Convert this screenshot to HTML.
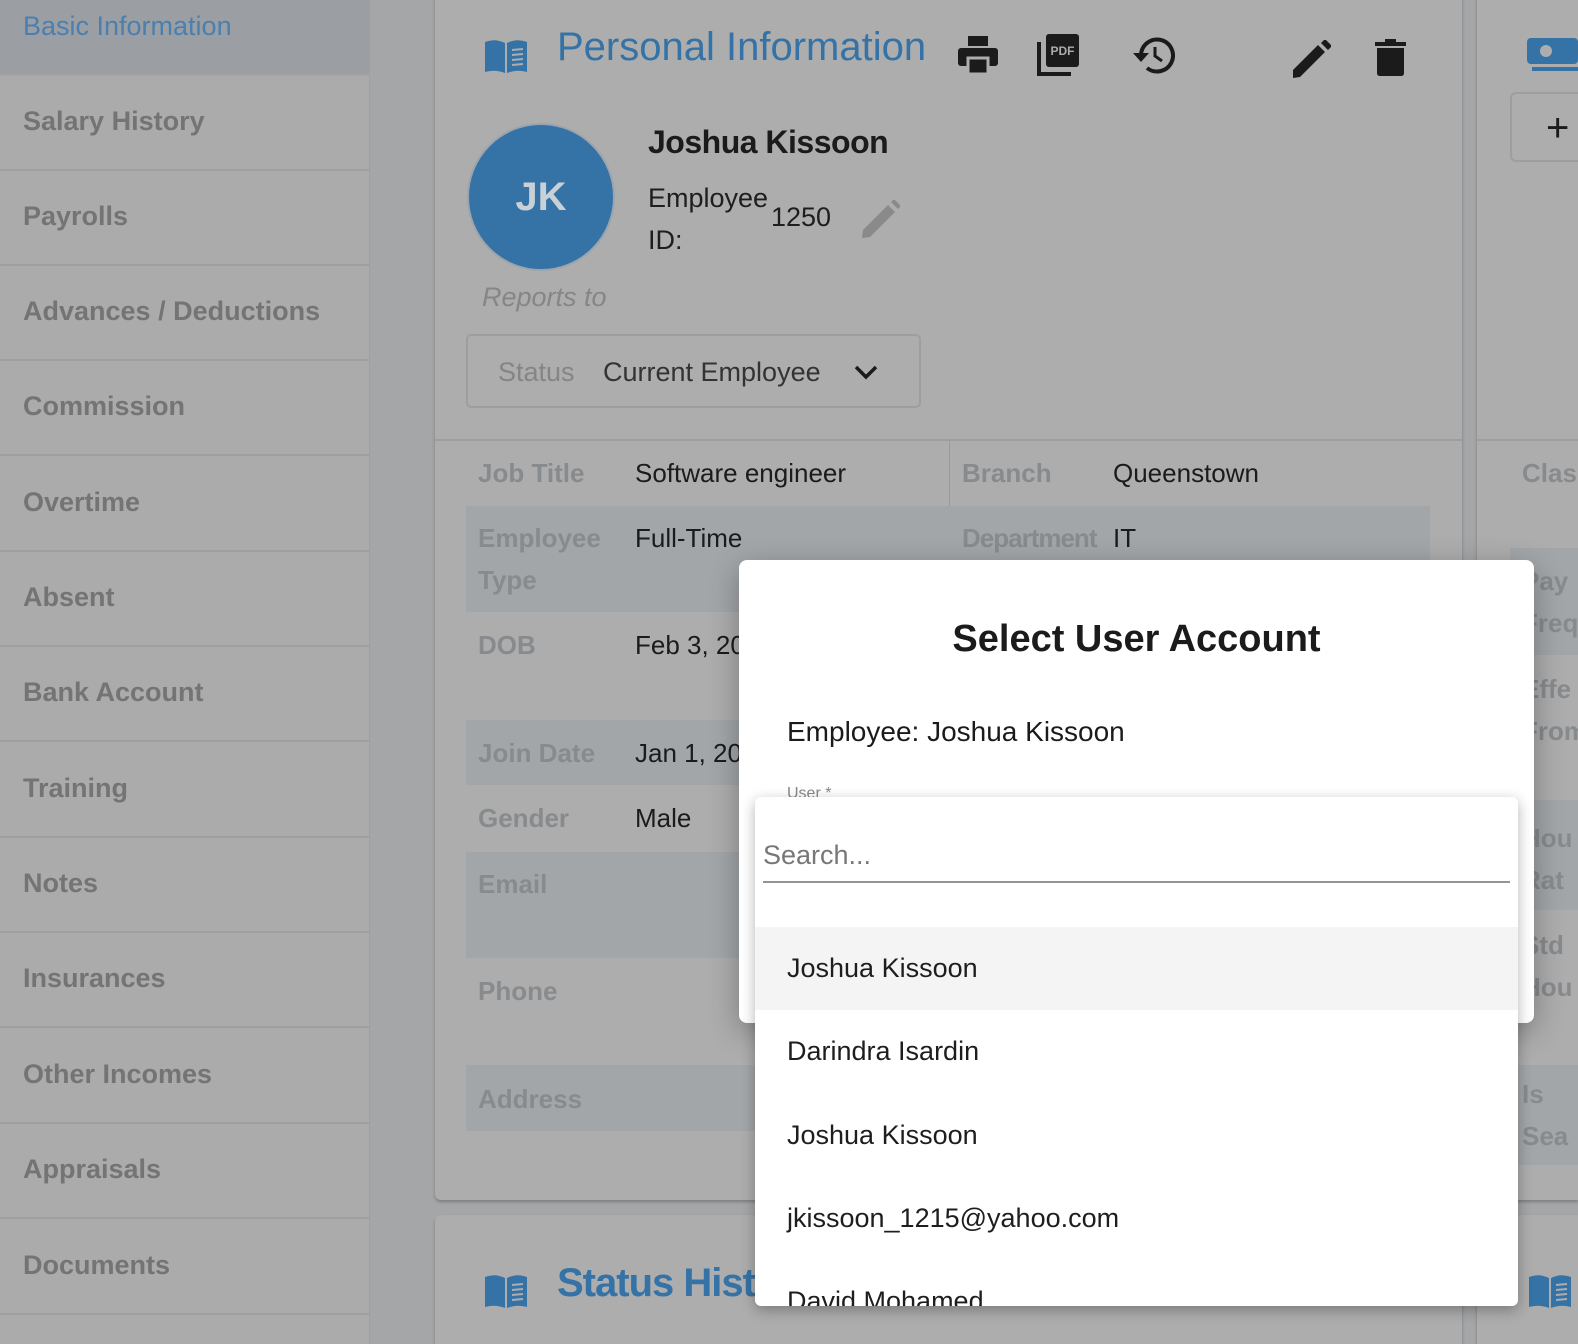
<!DOCTYPE html>
<html style="width:1578px;height:1344px;overflow:hidden"><head><meta charset="utf-8"><style>
*{margin:0;padding:0;box-sizing:border-box}
body{width:1578px;height:1344px;overflow:hidden;background:#a5a6a8;font-family:"Liberation Sans",sans-serif;position:relative}
.a{position:absolute;white-space:nowrap}
.side{position:absolute;left:0;top:0;width:370px;height:1344px;background:#ababab;border-right:1px solid #a0a0a0;overflow:hidden}
.si{position:absolute;left:0;width:370px;height:95px;border-bottom:2px solid #9f9f9f;font-size:27px;font-weight:bold;color:#747474;padding-left:23px}
.si span{position:absolute;left:23px;bottom:32px}
.panel{position:absolute;background:#adadad;border-radius:6px;box-shadow:0 2px 3px rgba(0,0,0,.25)}
.lbl{position:absolute;font-size:26px;font-weight:bold;color:#888b8e;line-height:42px}
.val{position:absolute;font-size:26px;color:#1b1b1b;line-height:42px}
.sh{position:absolute;background:#a3a6a9}
.d{font-size:27px;color:#1e1e1e}
</style></head><body>
<div class="side">
<div class="si" style="top:-19px;background:#9b9fa3;border-bottom-color:#a3a3a3"><span style="color:#4a7fb0;font-weight:normal">Basic Information</span></div>
<div class="si" style="top:76px"><span>Salary History</span></div>
<div class="si" style="top:171px"><span>Payrolls</span></div>
<div class="si" style="top:266px"><span>Advances / Deductions</span></div>
<div class="si" style="top:361px"><span>Commission</span></div>
<div class="si" style="top:457px"><span>Overtime</span></div>
<div class="si" style="top:552px"><span>Absent</span></div>
<div class="si" style="top:647px"><span>Bank Account</span></div>
<div class="si" style="top:743px"><span>Training</span></div>
<div class="si" style="top:838px"><span>Notes</span></div>
<div class="si" style="top:933px"><span>Insurances</span></div>
<div class="si" style="top:1029px"><span>Other Incomes</span></div>
<div class="si" style="top:1124px"><span>Appraisals</span></div>
<div class="si" style="top:1220px"><span>Documents</span></div>
</div>

<div class="panel" style="left:435px;top:-10px;width:1027px;height:1210px"></div>
<div class="panel" style="left:435px;top:1215px;width:1027px;height:129px;border-radius:6px 6px 0 0"></div>
<div class="panel" style="left:1477px;top:-10px;width:101px;height:1210px;border-radius:6px 0 0 6px"></div>
<div class="panel" style="left:1477px;top:1215px;width:101px;height:129px;border-radius:6px 0 0 0"></div>

<svg class="a" style="left:483px;top:38px" width="46" height="36" viewBox="0 0 46 36"><path d="M2 4 Q12 0 22 5 V35 Q12 31 2 34Z M24 5 Q34 0 44 4 V34 Q34 31 24 35Z" fill="#3572a6"/><g stroke="#adadad" stroke-width="2"><line x1="29" y1="12" x2="40" y2="11"/><line x1="29" y1="17" x2="40" y2="16"/><line x1="29" y1="22" x2="40" y2="21"/><line x1="29" y1="27" x2="40" y2="26"/></g></svg>
<div class="a" style="left:557px;top:25px;font-size:40px;color:#3572a6">Personal Information</div>
<svg class="a" style="left:958px;top:36px" width="40" height="38" viewBox="0 0 40 38"><rect x="10" y="0" width="20" height="10" fill="#1b1b1b"/><rect x="0" y="12" width="40" height="18" rx="3" fill="#1b1b1b"/><rect x="10" y="22" width="20" height="16" fill="#1b1b1b" stroke="#adadad" stroke-width="3"/></svg>
<svg class="a" style="left:1037px;top:34px" width="42" height="42" viewBox="0 0 42 42"><path d="M2 8 V40 H34" stroke="#1b1b1b" stroke-width="4" fill="none"/><rect x="9" y="0" width="33" height="33" rx="3" fill="#1b1b1b"/><text x="25.5" y="21" font-size="12" font-family="Liberation Sans" fill="#adadad" text-anchor="middle" font-weight="bold">PDF</text></svg>
<svg class="a" style="left:1131px;top:35px" width="44" height="40" viewBox="0 0 44 40"><path d="M10 20 A16 16 0 1 1 16 33" stroke="#1b1b1b" stroke-width="4" fill="none"/><path d="M2 18 L10 27 L18 18Z" fill="#1b1b1b"/><path d="M24 12 V21 L31 26" stroke="#1b1b1b" stroke-width="3" fill="none"/></svg>
<svg class="a" style="left:1291px;top:40px" width="40" height="38" viewBox="0 0 40 38"><path d="M2 38 L2 30 L27 5 L34 12 L9 37Z M30 3 L34 -1 L41 6 L37 10Z" fill="#1b1b1b"/></svg>
<svg class="a" style="left:1375px;top:39px" width="32" height="38" viewBox="0 0 32 38"><rect x="0" y="3" width="31" height="4" fill="#1b1b1b"/><rect x="10" y="0" width="11" height="4" fill="#1b1b1b"/><path d="M2 9 H29 V34 Q29 37 26 37 H5 Q2 37 2 34Z" fill="#1b1b1b"/></svg>

<div class="a" style="left:467px;top:123px;width:148px;height:148px;border-radius:50%;background:#3572a6;border:2px solid #9ba4ad;color:#c9d0d6;font-size:40px;font-weight:bold;text-align:center;line-height:144px">JK</div>
<div class="a" style="left:648px;top:124px;font-size:32px;color:#1b1b1b;font-weight:bold;letter-spacing:-0.5px">Joshua Kissoon</div>
<div class="a d" style="left:648px;top:177px;line-height:42px;white-space:normal;width:130px">Employee<br>ID:</div>
<div class="a d" style="left:771px;top:202px">1250</div>
<svg class="a" style="left:862px;top:200px" width="38" height="38" viewBox="0 0 38 38"><path d="M0 38 L1 30 L26 5 L33 12 L8 37Z M29 2 L32 -1 L39 6 L36 9Z" fill="#8a8a8a"/></svg>
<div class="a" style="left:482px;top:282px;font-size:27px;font-style:italic;color:#868686">Reports to</div>
<div class="a" style="left:466px;top:334px;width:455px;height:74px;border:2px solid #9e9e9e;border-radius:5px"></div>
<div class="a" style="left:498px;top:357px;font-size:27px;color:#858585">Status</div>
<div class="a" style="left:603px;top:357px;font-size:27px;color:#333">Current Employee</div>
<svg class="a" style="left:854px;top:364px" width="24" height="16" viewBox="0 0 24 16"><path d="M2 3 L12 13 L22 3" stroke="#1b1b1b" stroke-width="3.5" fill="none"/></svg>

<svg class="a" style="left:1527px;top:38px" width="51" height="34" viewBox="0 0 51 34"><rect x="0" y="0" width="51" height="26" rx="4" fill="#3572a6"/><circle cx="19" cy="13" r="6" fill="#adadad"/><rect x="5" y="29" width="46" height="4" fill="#3572a6"/></svg>
<div class="a" style="left:1510px;top:92px;width:90px;height:70px;border:2px solid #9e9e9e;border-radius:6px"></div>
<div class="a" style="left:1546px;top:106px;font-size:40px;color:#1b1b1b">+</div>

<div class="a" style="left:435px;top:439px;width:1027px;height:2px;background:#9d9d9d"></div>
<div class="a" style="left:1477px;top:439px;width:101px;height:2px;background:#9d9d9d"></div>
<div class="a" style="left:949px;top:441px;width:1px;height:120px;background:#999"></div>
<div class="sh" style="left:466px;top:506px;width:964px;height:106px"></div>
<div class="sh" style="left:466px;top:720px;width:300px;height:65px"></div>
<div class="sh" style="left:466px;top:852px;width:300px;height:106px"></div>
<div class="sh" style="left:466px;top:1065px;width:300px;height:66px"></div>
<div class="sh" style="left:1510px;top:548px;width:68px;height:107px"></div>
<div class="sh" style="left:1510px;top:800px;width:68px;height:110px"></div>
<div class="sh" style="left:1510px;top:1065px;width:68px;height:100px"></div>
<div class="lbl" style="left:478px;top:452px">Job Title</div><div class="val" style="left:635px;top:452px">Software engineer</div>
<div class="lbl" style="left:962px;top:452px">Branch</div><div class="val" style="left:1113px;top:452px">Queenstown</div>
<div class="lbl" style="left:478px;top:517px">Employee<br>Type</div><div class="val" style="left:635px;top:517px">Full-Time</div>
<div class="lbl" style="left:962px;top:517px;letter-spacing:-1px">Department</div><div class="val" style="left:1113px;top:517px">IT</div>
<div class="lbl" style="left:478px;top:624px">DOB</div><div class="val" style="left:635px;top:624px">Feb 3, 2000</div>
<div class="lbl" style="left:478px;top:732px">Join Date</div><div class="val" style="left:635px;top:732px">Jan 1, 2020</div>
<div class="lbl" style="left:478px;top:797px">Gender</div><div class="val" style="left:635px;top:797px">Male</div>
<div class="lbl" style="left:478px;top:863px">Email</div>
<div class="lbl" style="left:478px;top:970px">Phone</div>
<div class="lbl" style="left:478px;top:1078px">Address</div>
<div class="lbl" style="left:1522px;top:452px">Class</div>
<div class="lbl" style="left:1522px;top:560px">Pay<br>Freq</div>
<div class="lbl" style="left:1522px;top:668px">Effe<br>From</div>
<div class="lbl" style="left:1522px;top:817px">Hou<br>Rat</div>
<div class="lbl" style="left:1522px;top:924px">Std<br>Hou</div>
<div class="lbl" style="left:1522px;top:1073px">Is<br>Sea</div>

<svg class="a" style="left:483px;top:1273px" width="46" height="36" viewBox="0 0 46 36"><path d="M2 4 Q12 0 22 5 V35 Q12 31 2 34Z M24 5 Q34 0 44 4 V34 Q34 31 24 35Z" fill="#3572a6"/><g stroke="#adadad" stroke-width="2"><line x1="29" y1="12" x2="40" y2="11"/><line x1="29" y1="17" x2="40" y2="16"/><line x1="29" y1="22" x2="40" y2="21"/><line x1="29" y1="27" x2="40" y2="26"/></g></svg>
<div class="a" style="left:557px;top:1261px;font-size:40px;color:#3572a6;font-weight:bold;letter-spacing:-1px">Status History</div>
<svg class="a" style="left:1527px;top:1273px" width="46" height="36" viewBox="0 0 46 36"><path d="M2 4 Q12 0 22 5 V35 Q12 31 2 34Z M24 5 Q34 0 44 4 V34 Q34 31 24 35Z" fill="#3572a6"/><g stroke="#adadad" stroke-width="2"><line x1="29" y1="12" x2="40" y2="11"/><line x1="29" y1="17" x2="40" y2="16"/><line x1="29" y1="22" x2="40" y2="21"/><line x1="29" y1="27" x2="40" y2="26"/></g></svg>

<div class="a" style="left:739px;top:560px;width:795px;height:463px;background:#fff;border-radius:8px;box-shadow:0 8px 30px rgba(0,0,0,.3)"></div>
<div class="a" style="left:739px;top:618px;width:795px;text-align:center;font-size:38px;font-weight:bold;color:#1b1b1b">Select User Account</div>
<div class="a" style="left:787px;top:716px;font-size:28px;color:#1b1b1b">Employee: Joshua Kissoon</div>
<div class="a" style="left:787px;top:785px;font-size:16px;color:#888">User *</div>
<div class="a" style="left:755px;top:797px;width:763px;height:509px;background:#fff;border-radius:6px;box-shadow:0 4px 14px rgba(0,0,0,.3);overflow:hidden">
<div class="a" style="left:8px;top:43px;font-size:27px;color:#777">Search...</div>
<div class="a" style="left:8px;top:84px;width:747px;height:2px;background:#949494"></div>
<div class="a" style="left:0;top:130px;width:763px;height:83px;background:#f4f4f4"></div>
<div class="a d" style="left:32px;top:156px">Joshua Kissoon</div>
<div class="a d" style="left:32px;top:239px">Darindra Isardin</div>
<div class="a d" style="left:32px;top:323px">Joshua Kissoon</div>
<div class="a d" style="left:32px;top:406px">jkissoon_1215@yahoo.com</div>
<div class="a d" style="left:32px;top:489px">David Mohamed</div>
</div>
</body></html>
